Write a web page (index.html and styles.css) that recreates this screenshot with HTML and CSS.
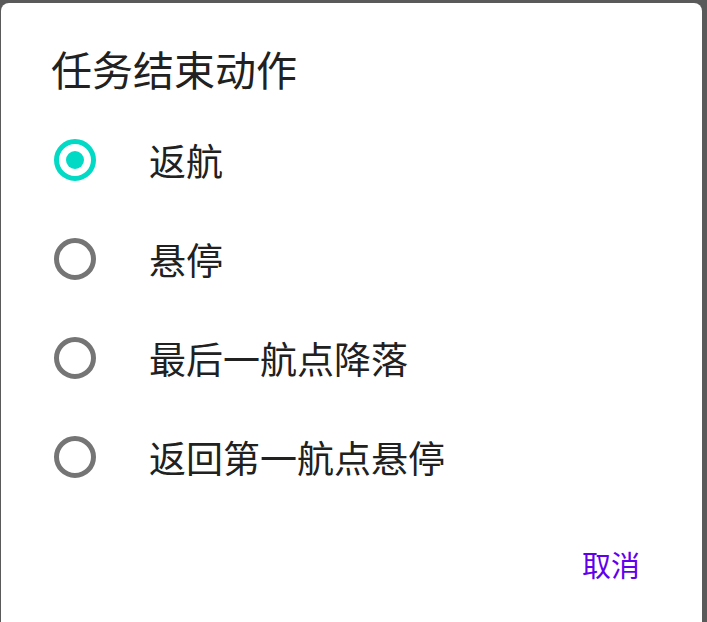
FILE: index.html
```html
<!DOCTYPE html>
<html lang="zh-CN">
<head>
    <meta charset="UTF-8">
    <meta name="viewport" content="width=device-width, initial-scale=1.0">
    <title>任务结束动作</title>
    <link rel="stylesheet" href="styles.css">
</head>
<body>
    <div class="dialog">
        <h1 class="dialog-title">任务结束动作</h1>
        <ul class="choices">
            <li class="choice checked"><span class="radio"></span><span class="label">返航</span></li>
            <li class="choice"><span class="radio"></span><span class="label">悬停</span></li>
            <li class="choice"><span class="radio"></span><span class="label">最后一航点降落</span></li>
            <li class="choice"><span class="radio"></span><span class="label">返回第一航点悬停</span></li>
        </ul>
        <div class="actions">
            <button class="text-button">取消</button>
        </div>
    </div>
</body>
</html>
```

FILE: styles.css
```css
/* 对话框样式 */
body {
    margin: 0;
    padding: 3px 5px 0 1px;
    background-color: #5a5a5a;
    font-family: "Noto Sans CJK SC", "Noto Sans", sans-serif;
    height: 622px;
    box-sizing: border-box;
    overflow: hidden;
}

.dialog {
    background-color: #fff;
    border-radius: 8px;
    height: 640px;
}

.dialog-title {
    margin: 0;
    padding: 45px 0 0 50px;
    height: 62px;
    font-size: 41px;
    font-weight: normal;
    line-height: 41px;
    color: #212121;
}

.choices {
    list-style: none;
    margin: 0;
    padding: 0;
}

.choice {
    display: flex;
    align-items: center;
    height: 99px;
    padding-left: 53px;
}

/* 单选按钮 */
.radio {
    width: 32px;
    height: 32px;
    border: 5px solid #757575;
    border-radius: 50%;
    position: relative;
    flex-shrink: 0;
}

.choice.checked .radio {
    border-color: #03dac5;
}

.choice.checked .radio::after {
    content: "";
    position: absolute;
    left: 7px;
    top: 7px;
    width: 18px;
    height: 18px;
    border-radius: 50%;
    background-color: #03dac5;
}

.label {
    margin-left: 53px;
    font-size: 37px;
    color: #212121;
}

.actions {
    display: flex;
    justify-content: flex-end;
    padding: 37px 62px 0 0;
}

.text-button {
    background: none;
    border: none;
    padding: 0;
    font-family: inherit;
    font-size: 29px;
    color: #6200ee;
    cursor: pointer;
}
```
